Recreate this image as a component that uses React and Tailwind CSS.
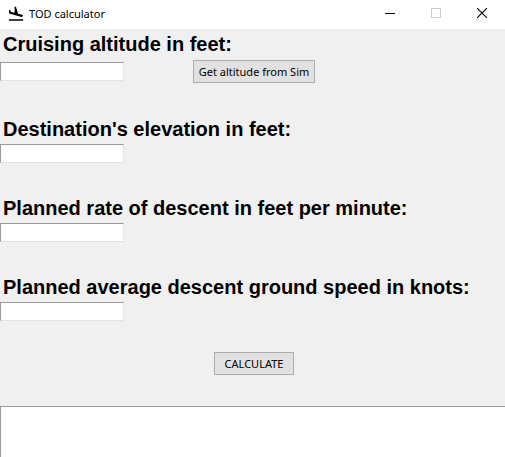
import { useState } from "react"
import { MdFlightLand } from "react-icons/md"

const inputClass =
  "block w-[124px] h-[19px] px-1 bg-white border border-t-[#999] border-l-[#999] border-r-[#e3e3e3] border-b-[#e3e3e3] text-xs outline-none"

const buttonClass =
  "h-[23px] bg-[#e1e1e1] border border-[#adadad] font-['Noto_Sans',sans-serif] text-[11px] leading-5 text-black whitespace-nowrap hover:border-[#0078d7]"

function TitleBar() {
  return (
    <header className="flex items-center justify-between h-[29px] bg-white pl-[7px]">
      <div className="flex items-center gap-1 h-full pb-0.5">
        <MdFlightLand className="size-[18px]" />
        <h1 className="font-['Noto_Sans',sans-serif] text-[11px] leading-4">TOD calculator</h1>
      </div>
      <div className="flex h-full pb-1">
        <button type="button" aria-label="Minimize" className="flex items-center justify-center w-[46px]">
          <svg width="10" height="10" viewBox="0 0 10 10" shapeRendering="crispEdges">
            <path d="M0 5h10v1H0z" />
          </svg>
        </button>
        <button type="button" aria-label="Maximize" disabled className="flex items-center justify-center w-[46px]">
          <svg width="10" height="10" viewBox="0 0 10 10" shapeRendering="crispEdges">
            <path d="M.5.5h9v9h-9z" fill="none" stroke="#ccc" />
          </svg>
        </button>
        <button type="button" aria-label="Close" className="flex items-center justify-center w-[46px]">
          <svg width="10" height="10" viewBox="0 0 10 10">
            <path d="M0 0l10 10M10 0L0 10" fill="none" stroke="#000" strokeWidth="1.1" />
          </svg>
        </button>
      </div>
    </header>
  )
}

function Field({ id, label, value, onChange }) {
  return (
    <div>
      <FieldLabel id={id}>{label}</FieldLabel>
      <input id={id} className={inputClass} value={value} onChange={e => onChange(e.target.value)} />
    </div>
  )
}

function FieldLabel({ id, children }) {
  return (
    <label htmlFor={id} className="block pl-[3px] text-xl leading-[30px] font-bold">
      {children}
    </label>
  )
}

export default function App() {
  const [altitude, setAltitude] = useState("")
  const [elevation, setElevation] = useState("")
  const [rate, setRate] = useState("")
  const [speed, setSpeed] = useState("")
  const [result, setResult] = useState("")

  function calculate() {
    const minutes = (Number(altitude) - Number(elevation)) / Number(rate)
    const distance = (minutes * Number(speed)) / 60
    if (Number.isFinite(distance)) setResult(distance.toFixed(1))
  }

  return (
    <div className="flex flex-col min-h-screen bg-[#f0f0f0] text-black font-['Liberation_Sans',Arial,sans-serif]">
      <TitleBar />
      <main className="flex flex-col grow">
        <div className="flex flex-col gap-[30px]">
          <div>
            <FieldLabel id="altitude">Cruising altitude in feet:</FieldLabel>
            <div className="flex items-center py-px">
              <input
                id="altitude"
                className={inputClass}
                value={altitude}
                onChange={e => setAltitude(e.target.value)}
              />
              <button type="button" className={`${buttonClass} ml-[69px] w-[122px]`}>
                Get altitude from Sim
              </button>
            </div>
          </div>
          <Field id="elevation" label="Destination's elevation in feet:" value={elevation} onChange={setElevation} />
          <Field id="rate" label="Planned rate of descent in feet per minute:" value={rate} onChange={setRate} />
          <Field
            id="speed"
            label="Planned average descent ground speed in knots:"
            value={speed}
            onChange={setSpeed}
          />
        </div>

        <div className="flex justify-center py-[31px] pl-[3px]">
          <button type="button" className={`${buttonClass} w-20`} onClick={calculate}>
            CALCULATE
          </button>
        </div>

        {/* Result box */}
        <textarea
          readOnly
          aria-label="Result"
          value={result}
          className="grow w-full min-h-[51px] px-1 bg-white border-t border-l border-[#999] text-sm resize-none outline-none"
        />
      </main>
    </div>
  )
}
